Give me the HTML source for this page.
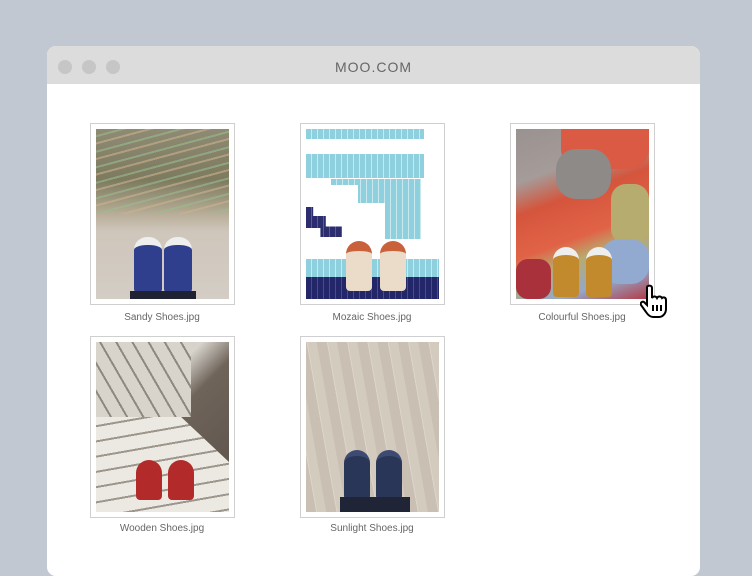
<!DOCTYPE html>
<html><head><style>
*{margin:0;padding:0;box-sizing:border-box}
body{width:752px;height:564px;background:#c1c8d1;position:relative;overflow:hidden;font-family:"Liberation Sans",sans-serif}
.win{position:absolute;left:47px;top:46px;width:653px;height:530px;background:#fff;border-radius:9px;overflow:hidden}
.bar{height:38px;background:#dcdcdc;position:relative}
.dot{position:absolute;top:14px;width:14px;height:14px;border-radius:50%;background:#c6c6c6}
.title{position:absolute;left:0;right:0;top:13px;text-align:center;font-size:14px;letter-spacing:1px;color:#666}
.card{position:absolute;width:145px;height:182px;border:1px solid #cfcfcf;background:#fff;padding:5px}
.img{width:133px;height:170px;position:relative;overflow:hidden}
.lbl{position:absolute;width:200px;text-align:center;font-size:10px;color:#666}
.shoe{position:absolute;width:26px;height:50px;border-radius:13px 13px 4px 4px}
</style></head><body>
<div class="win">
<div class="bar"><div class="dot" style="left:11px"></div><div class="dot" style="left:35px"></div><div class="dot" style="left:59px"></div><div class="title">MOO.COM</div></div>
</div>

<div class="card" style="left:90px;top:123px"><div class="img" style="background:linear-gradient(180deg,#8f8a74 0%,#7d7a60 30%,#b8ad98 50%,#cfc6bb 60%,#d3cdc5 100%)">
<div style="position:absolute;left:0;top:0;width:133px;height:85px;background:repeating-linear-gradient(165deg,transparent 0 6px,rgba(150,190,140,.6) 6px 8px,transparent 8px 13px,rgba(200,180,140,.6) 13px 15px)"></div>
<div class="shoe" style="left:38px;top:108px;width:28px;height:56px;background:#2f3f8e;border-top:8px solid #eee"></div>
<div class="shoe" style="left:68px;top:108px;width:28px;height:56px;background:#2f3f8e;border-top:8px solid #eee"></div>
<div style="position:absolute;left:34px;top:162px;width:66px;height:8px;background:#1e2233"></div>
</div></div>
<div class="lbl" style="left:62px;top:312px">Sandy Shoes.jpg</div>

<div class="card" style="left:300px;top:123px"><div class="img" style="background:#fff">
<div style="position:absolute;left:0;top:0;width:118px;height:10px;background:repeating-linear-gradient(90deg,#8fd0de 0 5px,#c9e9ef 5px 6px)"></div>
<div style="position:absolute;left:0;top:25px;width:118px;height:24px;background:repeating-linear-gradient(90deg,#8fd0de 0 5px,#c9e9ef 5px 6px)"></div>
<div style="position:absolute;left:25px;top:50px;width:90px;height:60px;background:repeating-linear-gradient(90deg,#8fd0de 0 5px,#c9e9ef 5px 6px);clip-path:polygon(0 0,100% 0,100% 100%,60% 100%,60% 40%,30% 40%,30% 10%,0 10%)"></div>
<div style="position:absolute;left:0;top:78px;width:36px;height:30px;background:repeating-linear-gradient(90deg,#2b2d6e 0 5px,#5a5c90 5px 6px);clip-path:polygon(0 0,20% 0,20% 30%,55% 30%,55% 65%,100% 65%,100% 100%,40% 100%,40% 70%,0 70%)"></div>
<div style="position:absolute;left:0;top:130px;width:133px;height:20px;background:repeating-linear-gradient(90deg,#8fd0de 0 5px,#c9e9ef 5px 6px)"></div>
<div style="position:absolute;left:0;top:148px;width:133px;height:22px;background:repeating-linear-gradient(90deg,#24266a 0 5px,#4a4c85 5px 6px)"></div>
<div class="shoe" style="left:40px;top:112px;background:#eadcc8;border-top:10px solid #c9623a"></div>
<div class="shoe" style="left:74px;top:112px;background:#eadcc8;border-top:10px solid #c9623a"></div>
</div></div>
<div class="lbl" style="left:272px;top:312px">Mozaic Shoes.jpg</div>

<div class="card" style="left:510px;top:123px"><div class="img" style="background:linear-gradient(160deg,#9a9290 0%,#a59c9a 25%,#d4553c 40%,#e16347 60%,#b8aa6e 70%,#93a9c9 85%,#b33a45 100%)">
<div style="position:absolute;left:45px;top:0;width:88px;height:40px;background:#db5a43;border-radius:0 0 20px 20px"></div>
<div style="position:absolute;left:40px;top:20px;width:55px;height:50px;background:#8e8a88;border-radius:20px"></div>
<div style="position:absolute;left:95px;top:55px;width:38px;height:60px;background:#b6ac70;border-radius:15px"></div>
<div style="position:absolute;left:85px;top:110px;width:48px;height:45px;background:#92aad0;border-radius:18px"></div>
<div style="position:absolute;left:0;top:130px;width:35px;height:40px;background:#a8313c;border-radius:12px"></div>
<div class="shoe" style="left:37px;top:118px;background:#c28a2c;border-top:8px solid #eee"></div>
<div class="shoe" style="left:70px;top:118px;background:#c28a2c;border-top:8px solid #eee"></div>
</div></div>
<div class="lbl" style="left:482px;top:312px">Colourful Shoes.jpg</div>
<svg style="position:absolute;left:640px;top:284px" width="30" height="36" viewBox="0 0 30 36"><path d="M8 2c2-1 4 0 4 2v10c1-2 4-2 5 0 1-2 4-2 5 0 1-1 4-1 4 2v9c0 4-3 8-7 8h-6c-3 0-5-2-7-5l-5-7c-1-2 1-4 3-3l3 3V4c0-1 0-2 1-2z" fill="#fff" stroke="#000" stroke-width="2"/><path d="M13 21v6M17 21v6M21 21v6" stroke="#000" stroke-width="2"/></svg>

<div class="card" style="left:90px;top:336px"><div class="img" style="background:linear-gradient(135deg,#b9b4ab 0%,#d8d4cc 35%,#6e645a 50%,#5a5048 100%)">
<div style="position:absolute;left:0;top:70px;width:133px;height:100px;background:repeating-linear-gradient(170deg,#ece9e3 0 13px,#9d968c 13px 15px);clip-path:polygon(0 0,60% 0,100% 50%,100% 100%,0 100%)"></div>
<div style="position:absolute;left:0;top:0;width:95px;height:75px;background:repeating-linear-gradient(60deg,#d9d4cb 0 12px,#8f887e 12px 14px)"></div>
<div class="shoe" style="left:40px;top:118px;background:#b22a2a;height:40px"></div>
<div class="shoe" style="left:72px;top:118px;background:#b22a2a;height:40px"></div>
</div></div>
<div class="lbl" style="left:62px;top:523px">Wooden Shoes.jpg</div>

<div class="card" style="left:300px;top:336px"><div class="img" style="background:repeating-linear-gradient(80deg,#c9bfb3 0 10px,#ddd5cb 10px 11px,#d4cbbf 11px 20px),linear-gradient(#d8d0c5,#c5b9ab)">
<div class="shoe" style="left:38px;top:108px;background:#2a3658;border-top:6px solid #3d4b72"></div>
<div class="shoe" style="left:70px;top:108px;background:#2a3658;border-top:6px solid #3d4b72"></div>
<div style="position:absolute;left:34px;top:155px;width:70px;height:15px;background:#1f2436"></div>
</div></div>
<div class="lbl" style="left:272px;top:523px">Sunlight Shoes.jpg</div>
</body></html>
